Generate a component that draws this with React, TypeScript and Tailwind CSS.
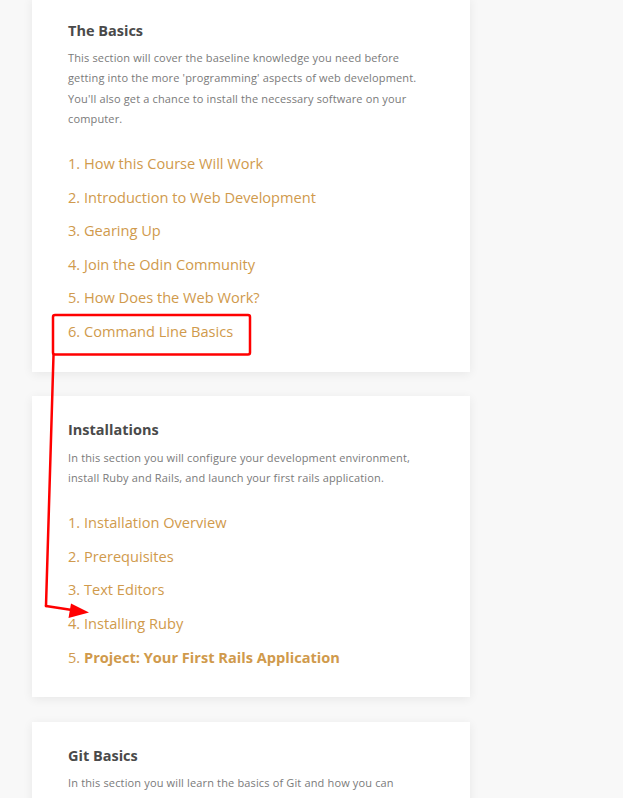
import React from "react";

type Section = {
  title: string;
  desc: string[];
  links: { text: string; bold?: boolean }[];
};

const sections: Section[] = [
  {
    title: "The Basics",
    desc: [
      "This section will cover the baseline knowledge you need before",
      "getting into the more 'programming' aspects of web development.",
      "You'll also get a chance to install the necessary software on your",
      "computer.",
    ],
    links: [
      { text: "How this Course Will Work" },
      { text: "Introduction to Web Development" },
      { text: "Gearing Up" },
      { text: "Join the Odin Community" },
      { text: "How Does the Web Work?" },
      { text: "Command Line Basics" },
    ],
  },
  {
    title: "Installations",
    desc: [
      "In this section you will configure your development environment,",
      "install Ruby and Rails, and launch your first rails application.",
    ],
    links: [
      { text: "Installation Overview" },
      { text: "Prerequisites" },
      { text: "Text Editors" },
      { text: "Installing Ruby" },
      { text: "Project: Your First Rails Application", bold: true },
    ],
  },
  {
    title: "Git Basics",
    desc: [
      "In this section you will learn the basics of Git and how you can",
      "use this tool to track your code and collaborate with others.",
    ],
    links: [
      { text: "Introduction to Git" },
      { text: "Git Basics" },
    ],
  },
];

function Card({ s }: { s: Section }) {
  return (
    <div className="w-[438px] bg-white shadow-[0_2px_10px_rgba(0,0,0,0.07)] px-[36px] pt-[23px] pb-[23px]">
      <h2 className="text-[14.5px] leading-[21px] font-bold text-[#4a4a4a]">
        {s.title}
      </h2>
      <p className="mt-[7.5px] text-[11px] leading-[20.3px] text-[#7a7a7a] tracking-[0.15px]">
        {s.desc.map((line, i) => (
          <span key={i} className="block whitespace-nowrap">
            {line}
          </span>
        ))}
      </p>
      <ul className="mt-[18px]">
        {s.links.map((l, i) => (
          <li
            key={i}
            className="h-[33.6px] flex items-center text-[14.6px] text-[#d09a4c]"
          >
            <span>{i + 1}.&nbsp;</span>
            <span className={l.bold ? "font-bold" : ""}>{l.text}</span>
          </li>
        ))}
      </ul>
    </div>
  );
}

export default function App() {
  return (
    <div
      className="relative w-[623px] h-[798px] overflow-hidden bg-[#f8f8f8]"
      style={{ fontFamily: '"Open Sans", "Noto Sans", sans-serif' }}
    >
      <div className="flex flex-col gap-[24.5px] pl-[32px] -mt-[3.5px]">
        {sections.map((s, i) => (
          <Card key={i} s={s} />
        ))}
      </div>
      <svg
        className="absolute inset-0 pointer-events-none"
        width="623"
        height="798"
        viewBox="0 0 623 798"
      >
        <rect
          x="53"
          y="315"
          width="197"
          height="39.5"
          rx="2"
          fill="none"
          stroke="#ff0000"
          strokeWidth="2.5"
        />
        <line
          x1="53.5"
          y1="355"
          x2="46"
          y2="606"
          stroke="#ff0000"
          strokeWidth="2.5"
          strokeLinecap="round"
        />
        <line
          x1="46"
          y1="606"
          x2="72"
          y2="610"
          stroke="#ff0000"
          strokeWidth="2.5"
          strokeLinecap="round"
        />
        <polygon points="89,612.5 71,603.5 68.5,618" fill="#ff0000" />
      </svg>
    </div>
  );
}
